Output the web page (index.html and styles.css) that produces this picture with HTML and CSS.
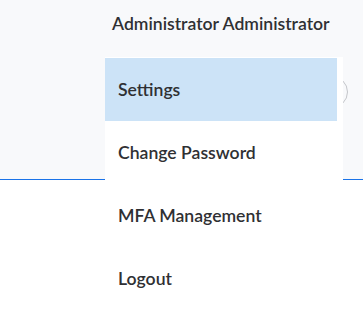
FILE: index.html
```html
<!DOCTYPE html>
<html lang="en">
<head>
  <meta charset="utf-8" />
  <title>User menu</title>
  <link rel="stylesheet" href="styles.css">
</head>
<body>
  <header class="topbar">
    <div class="user">
      <span class="user-name">Administrator Administrator</span>
      <span class="avatar"></span>
    </div>
  </header>

  <ul class="menu">
    <li class="menu-item active">Settings</li>
    <li class="menu-item">Change Password</li>
    <li class="menu-item">MFA Management</li>
    <li class="menu-item">Logout</li>
  </ul>
</body>
</html>
```

FILE: styles.css
```css
*{box-sizing:border-box;font-family:"Lato","Noto Sans",sans-serif;}
body{margin:0;background:#fff;color:#2f3033;height:327px;overflow:hidden;}
.topbar {
  height: 180px;
  background: #f8f9fb;
  border-bottom: 1px solid #1a73e8;
}
.user {
  padding: 12px 0 0 112px;
}
.user-name {
  display: block;
  font-size: 17.6px;
  font-weight: 600;
  line-height: 24px;
}
.avatar {
  position: absolute;
  left: 316px;
  top: 76px;
  width: 32px;
  height: 32px;
  border: 1px solid #c4c6ca;
  border-radius: 50%;
}
.menu {
  position: absolute;
  top: 57px;
  left: 105px;
  width: 238px;
  margin: 0;
  padding: 1px 6px 0 0;
  list-style: none;
  background: #fff;
}
.menu-item {
  height: 63px;
  padding: 0 13px;
  display: flex;
  align-items: center;
  font-size: 17.6px;
  font-weight: 600;
  cursor: pointer;
}
.menu-item.active {
  background: #cce3f7;
}
```
